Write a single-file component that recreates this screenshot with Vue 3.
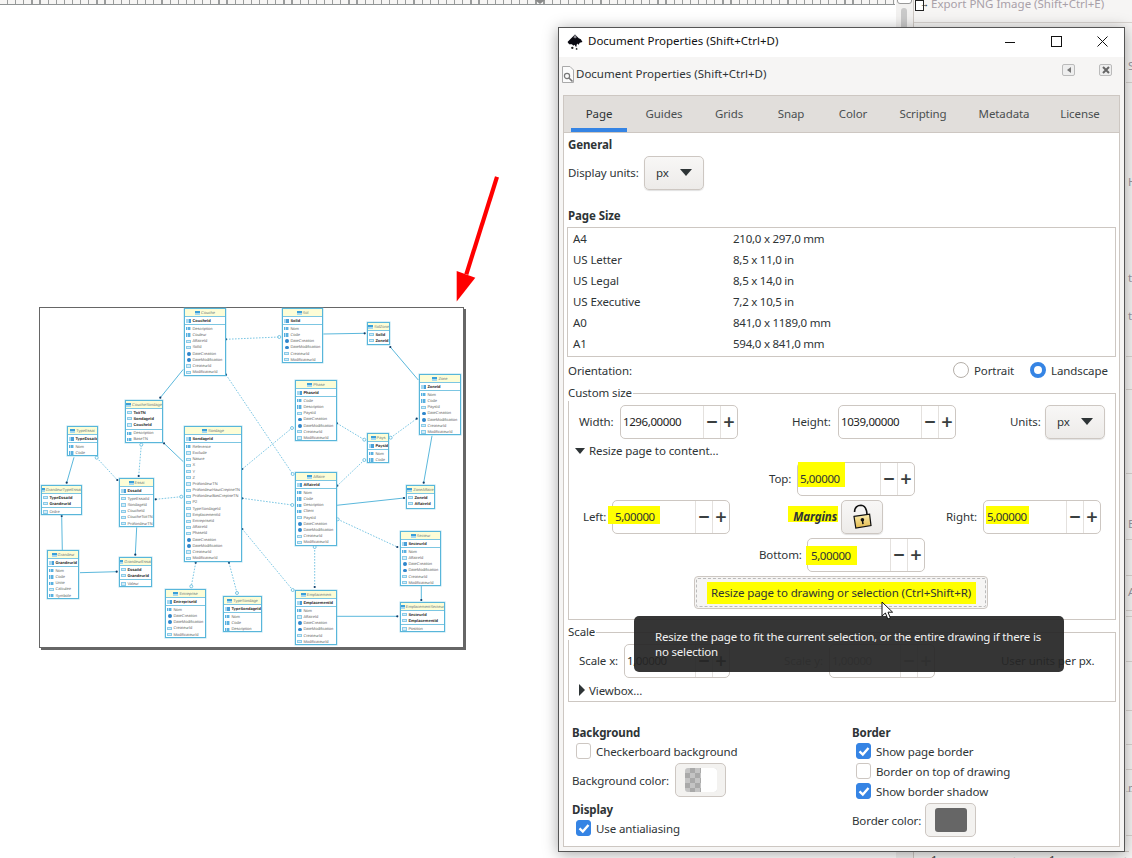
<script setup>
const t = (list, kind) => list.map((name) => ({ name, kind }));
const audit = [
  { name: 'DateCreation', kind: 'd' },
  { name: 'DateModification', kind: 'd' },
  { name: 'CreateurId', kind: 'n' },
  { name: 'ModificateurId', kind: 'n' },
];
const entities = [
  { name: 'Couche', x: 184, y: 308, w: 42, h: 68, pk: true, keys: ['CoucheId'], cols: [...t(['Description', 'Couleur'], 's'), ...t(['AffaireId', 'SolId'], 'n'), ...audit] },
  { name: 'CoucheSondage', x: 125, y: 400, w: 38, h: 43, keys: ['ToitTN', 'SondageId', 'CoucheId'], cols: t(['Description', 'BaseTN'], 's') },
  { name: 'TypeEssai', x: 67, y: 426, w: 31, h: 30, pk: true, keys: ['TypeEssaiId'], cols: t(['Nom', 'Code'], 's') },
  { name: 'Sondage', x: 184, y: 426, w: 58, h: 136, pk: true, keys: ['SondageId'], cols: [...t(['Reference'], 's'), ...t(['Exclude', 'Nature', 'X', 'Y', 'Z', 'ProfondeurTN', 'ProfondeurHautCrepineTN', 'ProfondeurBasCrepineTN', 'P2', 'TypeSondageId', 'EmplacementId', 'EntrepriseId', 'AffaireId', 'PhaseId'], 'n'), ...audit] },
  { name: 'GrandeurTypeEssai', x: 41, y: 485, w: 41, h: 30, keys: ['TypeEssaiId', 'GrandeurId'], cols: t(['Ordre'], 'n') },
  { name: 'Essai', x: 119, y: 478, w: 35, h: 49, pk: true, keys: ['EssaiId'], cols: t(['TypeEssaiId', 'SondageId', 'CoucheId', 'CoucheToitTN', 'ProfondeurTN'], 'n') },
  { name: 'Grandeur', x: 47, y: 550, w: 32, h: 49, pk: true, keys: ['GrandeurId'], cols: [...t(['Nom', 'Code', 'Unite'], 's'), ...t(['Calculee'], 'n'), ...t(['Symbole'], 's')] },
  { name: 'GrandeurEssai', x: 119, y: 557, w: 33, h: 30, keys: ['EssaiId', 'GrandeurId'], cols: t(['Valeur'], 'n') },
  { name: 'Entreprise', x: 165, y: 589, w: 41, h: 49, pk: true, keys: ['EntrepriseId'], cols: [...t(['Nom'], 's'), ...audit] },
  { name: 'TypeSondage', x: 223, y: 596, w: 39, h: 36, pk: true, keys: ['TypeSondageId'], cols: t(['Nom', 'Code', 'Description'], 's') },
  { name: 'Sol', x: 282, y: 308, w: 41, h: 55, pk: true, keys: ['SolId'], cols: [...t(['Nom', 'Code'], 's'), ...audit] },
  { name: 'SolZone', x: 367, y: 322, w: 23, h: 23, keys: ['SolId', 'ZoneId'], cols: [] },
  { name: 'Zone', x: 419, y: 374, w: 42, h: 61, pk: true, keys: ['ZoneId'], cols: [...t(['Nom', 'Code'], 's'), ...t(['PaysId'], 'n'), ...audit] },
  { name: 'Phase', x: 295, y: 380, w: 42, h: 61, pk: true, keys: ['PhaseId'], cols: [...t(['Code', 'Description'], 's'), ...t(['PaysId'], 'n'), ...audit] },
  { name: 'Pays', x: 367, y: 433, w: 22, h: 30, pk: true, keys: ['PaysId'], cols: t(['Nom', 'Code'], 's') },
  { name: 'Affaire', x: 295, y: 472, w: 42, h: 74, pk: true, keys: ['AffaireId'], cols: [...t(['Nom', 'Code', 'Description', 'Client'], 's'), ...t(['PaysId'], 'n'), ...audit] },
  { name: 'ZoneAffaire', x: 406, y: 485, w: 29, h: 24, keys: ['ZoneId', 'AffaireId'], cols: [] },
  { name: 'Secteur', x: 400, y: 531, w: 41, h: 55, pk: true, keys: ['SecteurId'], cols: [...t(['Nom'], 's'), ...t(['AffaireId'], 'n'), ...audit] },
  { name: 'EmplacementSecteur', x: 400, y: 602, w: 45, h: 30, keys: ['SecteurId', 'EmplacementId'], cols: t(['Position'], 'n') },
  { name: 'Emplacement', x: 295, y: 590, w: 42, h: 55, pk: true, keys: ['EmplacementId'], cols: [...t(['Nom'], 's'), ...t(['AffaireId'], 'n'), ...audit] },
];
// x1,y1,x2,y2,dashed, marker at start, marker at end ('d' = dot, 'c' = circle)
const links = [
  [183.3, 369.3, 160.3, 397.7, 0, '', 'd'],
  [164, 443.3, 183.3, 461.7, 0, 'd', ''],
  [226, 339.3, 279.3, 337, 1, 'd', 'c'],
  [226, 374.7, 292.7, 474, 1, 'd', 'c'],
  [74, 457.3, 66.7, 482.7, 0, '', 'd'],
  [96.7, 457.7, 117.3, 480, 1, 'c', 'd'],
  [141.3, 444.7, 138.7, 476, 1, 'c', 'd'],
  [61.7, 516, 62.3, 550, 0, 'd', ''],
  [80, 572.7, 116.7, 571.7, 0, '', 'd'],
  [136.7, 527.3, 135.3, 554.7, 0, '', 'd'],
  [155.7, 499.3, 181.3, 496.7, 1, 'd', 'c'],
  [195.7, 562.7, 191.3, 586.3, 1, 'd', 'c'],
  [229, 562.7, 237, 593, 1, 'd', 'c'],
  [242.3, 498.3, 292.3, 505, 1, 'd', 'c'],
  [242.3, 529, 292.7, 590, 1, 'd', 'c'],
  [242.3, 469, 292, 428, 1, 'd', 'c'],
  [323.3, 334, 364.7, 333.3, 0, '', 'd'],
  [390.3, 347, 418.3, 380, 0, 'd', ''],
  [337, 423.3, 364.3, 439.7, 1, 'd', 'c'],
  [390.7, 437.7, 416.7, 418.7, 1, 'c', 'd'],
  [364.3, 460, 337.3, 485.7, 1, 'c', 'd'],
  [432, 435.7, 423.7, 482.7, 0, '', 'd'],
  [336.7, 505.3, 404, 498, 0, '', 'd'],
  [337.7, 519.3, 397.3, 547, 1, 'c', 'd'],
  [314.7, 547, 314.7, 587, 1, 'c', 'd'],
  [421.3, 585.7, 421.3, 600, 0, '', 'd'],
  [336.7, 616.3, 397.3, 616.3, 0, '', 'd'],
].map(([x1, y1, x2, y2, dashed, a, b]) => ({ x1, y1, x2, y2, dashed, a, b }));
const markers = links.flatMap((l) => [
  ...(l.a ? [{ x: l.x1, y: l.y1, k: l.a }] : []),
  ...(l.b ? [{ x: l.x2, y: l.y2, k: l.b }] : []),
]);
const pageSizes = [
  ['A4', '210,0 x 297,0 mm'],
  ['US Letter', '8,5 x 11,0 in'],
  ['US Legal', '8,5 x 14,0 in'],
  ['US Executive', '7,2 x 10,5 in'],
  ['A0', '841,0 x 1189,0 mm'],
  ['A1', '594,0 x 841,0 mm'],
];
const tabs = [
  { label: 'Page', w: 56, gap: 9 },
  { label: 'Guides', w: 56, gap: 13 },
  { label: 'Grids', w: 48, gap: 16 },
  { label: 'Snap', w: 44, gap: 18 },
  { label: 'Color', w: 44, gap: 17 },
  { label: 'Scripting', w: 62, gap: 19 },
  { label: 'Metadata', w: 62, gap: 20 },
  { label: 'License', w: 50, gap: 0 },
];
const sideLines = [82, 356, 389, 473, 539, 575, 610, 616, 661, 710, 744, 769, 791, 835];
const sideText = [
  { s: 'S', y: 58 }, { s: 'H', y: 174 }, { s: 't', y: 270 }, { s: 't', y: 308 },
  { s: 'ES', y: 516 }, { s: 'AS', y: 584 }, { s: 'na', y: 780 },
];
</script>

<template>
  <div class="desktop">
    <div class="ruler"><span class="ruler-mark"></span></div>

    <div class="side">
      <div class="side-export"><span class="side-box"></span><span class="side-arrow">→</span>Export PNG Image (Shift+Ctrl+E)</div>
      <div class="side-rule"></div>
      <i v-for="y in sideLines" :key="y" class="side-line" :style="{ top: y + 'px' }"></i>
      <b v-for="x in sideText" :key="x.y" class="side-letter" :style="{ top: x.y + 'px' }">{{ x.s }}</b>
      <div class="side-foot"><span class="f1">1</span><span class="f2">+</span><span class="f3">1</span><span>+</span></div>
    </div>
    <div class="scroll"><span class="scroll-btn"></span><span class="scroll-thumb"></span></div>

    <div class="page"></div>
    <svg class="overlay" width="1132" height="858" viewBox="0 0 1132 858">
      <line v-for="(l, i) in links" :key="i" :x1="l.x1" :y1="l.y1" :x2="l.x2" :y2="l.y2"
        :class="l.dashed ? 'dash' : 'solid'" />
      <template v-for="(m, i) in markers" :key="'m' + i">
        <circle v-if="m.k === 'd'" :cx="m.x" :cy="m.y" r="1.1" fill="#0b3a66" />
        <circle v-else :cx="m.x" :cy="m.y" r="1.5" fill="#fff" stroke="#5bb8dc" stroke-width=".8" />
      </template>
      <path d="M495 176.2 L499 177.4 L468.3 275 L464.3 273.8 Z" fill="#ff0000" />
      <path d="M456.7 301.5 L456.7 271 L475.3 277.7 Z" fill="#ff0000" />
    </svg>

    <div v-for="e in entities" :key="e.name" class="entity"
      :style="{ left: e.x + 'px', top: e.y + 'px', width: e.w + 'px', height: e.h + 'px' }">
      <div class="e-head"><i class="e-tbl"></i>{{ e.name }}</div>
      <div class="e-keys">
        <div v-for="k in e.keys" :key="k" class="e-row e-key"><i :class="e.pk ? 'ic-pk' : 'ic-n'"></i>{{ k }}</div>
      </div>
      <div v-if="e.cols.length" class="e-cols">
        <div v-for="c in e.cols" :key="c.name" class="e-row"><i :class="'ic-' + c.kind"></i>{{ c.name }}</div>
      </div>
    </div>

    <section class="window">
      <header class="titlebar">
        <svg class="ink" width="16" height="16" viewBox="0 0 15 15">
          <path d="M7.5 .5 L11 4 L13 5 L14.5 7.5 L12 8.2 L10.8 10 L9.4 9 L8.6 12.5 L7 10 L6 11 L4.6 9.6 L2 9.5 L.5 7.5 L3 5 Z" fill="#0a0a12" />
          <path d="M7.5 .5 L9.2 3 L7.6 4.2 L6 3 Z" fill="#8a8a92" />
          <circle cx="5" cy="13" r="1.1" fill="#222" /><circle cx="9" cy="14" r=".8" fill="#222" />
        </svg>
        <span class="title">Document Properties (Shift+Ctrl+D)</span>
        <div class="wctl">
          <svg width="46" height="28" viewBox="0 0 46 28"><path d="M18 14.5 H28" stroke="#111" fill="none" /></svg>
          <svg width="46" height="28" viewBox="0 0 46 28"><rect x="18.5" y="8.5" width="10" height="10" stroke="#111" fill="none" /></svg>
          <svg width="46" height="28" viewBox="0 0 46 28"><path d="M18.5 8.5 L28.5 18.5 M28.5 8.5 L18.5 18.5" stroke="#111" fill="none" /></svg>
        </div>
      </header>

      <div class="dock">
        <svg width="14" height="17" viewBox="0 0 14 17">
          <path d="M1.5 .5 H9 L12.5 4 V16.5 H1.5 Z" fill="#fbfbfb" stroke="#aaa" />
          <circle cx="6" cy="10" r="2.6" fill="none" stroke="#777" stroke-width="1.2" />
          <path d="M8 12 L11.5 15.5" stroke="#777" stroke-width="1.6" />
        </svg>
        <span class="dock-title">Document Properties (Shift+Ctrl+D)</span>
        <div class="dock-btns">
          <span class="dock-btn"><svg width="10" height="10" viewBox="0 0 10 10"><path d="M7 2 V8 L3 5 Z" fill="#777" /></svg></span>
          <span class="dock-btn"><svg width="10" height="10" viewBox="0 0 10 10"><path d="M2 2 L8 8 M8 2 L2 8" stroke="#666" stroke-width="2" /></svg></span>
        </div>
      </div>

      <div class="notebook">
        <nav class="tabs">
          <span v-for="(tab, i) in tabs" :key="tab.label" class="tab" :class="{ active: i === 0 }"
            :style="{ width: tab.w + 'px', marginRight: tab.gap + 'px' }">{{ tab.label }}</span>
        </nav>

        <div class="content">
          <h4 class="head h-general">General</h4>
          <div class="display-row">
            <span class="l-display">Display units:</span>
            <span class="combo combo-display">px<i class="caret"></i></span>
          </div>

          <h4 class="head h-size">Page Size</h4>
          <div class="list">
            <div v-for="p in pageSizes" :key="p[0]" class="list-row"><span class="list-name">{{ p[0] }}</span><span class="list-dim">{{ p[1] }}</span></div>
          </div>

          <div class="orient">
            <span>Orientation:</span>
            <span class="radios">
              <i class="radio"></i><span class="r-label">Portrait</span>
              <i class="radio on"></i><span class="r-land">Landscape</span>
            </span>
          </div>

          <div class="frame frame-custom">
            <span class="legend">Custom size</span>
            <div class="row r-wh">
              <label class="l-w">Width:</label>
              <span class="spin"><span class="val plain">1296,00000</span><i>−</i><i>+</i></span>
              <label class="l-h">Height:</label>
              <span class="spin"><span class="val plain">1039,00000</span><i>−</i><i>+</i></span>
              <label class="l-u">Units:</label>
              <span class="combo combo-units">px<i class="caret"></i></span>
            </div>
            <div class="expander"><i class="tri-down"></i>Resize page to content...</div>
            <div class="row r-top m1">
              <label class="l-top">Top:</label>
              <span class="spin"><span class="val"><mark class="hl hl-top">5,00000</mark></span><i>−</i><i>+</i></span>
            </div>
            <div class="row r-mid m1">
              <label class="l-left">Left:</label>
              <span class="spin"><span class="val"><mark class="hl hl-left">5,00000</mark></span><i>−</i><i>+</i></span>
              <mark class="hl-margins">Margins</mark>
              <span class="lock">
                <svg width="22" height="26" viewBox="0 0 22 26">
                  <defs>
                    <linearGradient id="lockbody" x1="0" y1="0" x2="0" y2="1">
                      <stop offset="0" stop-color="#fbeeb0" />
                      <stop offset="1" stop-color="#e3b94c" />
                    </linearGradient>
                  </defs>
                  <path d="M3.6 8 C3.4 3.4 6.6 1.2 10 1.2 C13.6 1.4 15.6 4.2 16 10.4" fill="none" stroke="#111" stroke-width="1.6" />
                  <path d="M3 12.4 L18.6 10.2 L20 21.6 L4.8 24 Z" fill="url(#lockbody)" stroke="#111" stroke-width="1.2" />
                  <circle cx="11.4" cy="15.8" r="1.8" fill="#111" /><path d="M11.4 16.2 L12 20.2" stroke="#111" stroke-width="1.5" />
                </svg>
              </span>
              <label class="l-right">Right:</label>
              <span class="spin"><span class="val"><mark class="hl hl-right">5,00000</mark></span><i>−</i><i>+</i></span>
            </div>
            <div class="row r-bot m1">
              <label class="l-bot">Bottom:</label>
              <span class="spin"><span class="val"><mark class="hl hl-bot">5,00000</mark></span><i>−</i><i>+</i></span>
            </div>
            <div class="r-btn">
              <div class="resize-btn"><mark class="hl-btn">Resize page to drawing or selection (Ctrl+Shift+R)</mark></div>
            </div>
          </div>

          <div class="frame frame-scale">
            <span class="legend">Scale</span>
            <div class="row r-scale">
              <label class="l-sx">Scale x:</label>
              <span class="spin spin-s"><span class="val plain">1,00000</span><i>−</i><i>+</i></span>
              <label class="l-sy">Scale y:</label>
              <span class="spin spin-s dis"><span class="val plain">1,00000</span><i>−</i><i>+</i></span>
              <label class="l-uu">User units per px.</label>
            </div>
            <div class="expander vb"><i class="tri-right"></i>Viewbox...</div>
          </div>

          <div class="bottom">
            <div class="col-l">
              <h4 class="head b-head">Background</h4>
              <div class="chk c1"><i class="box"></i>Checkerboard background</div>
              <div class="color-row"><span class="l-bg">Background color:</span>
                <span class="swatch-btn"><i class="swatch checker"></i></span>
              </div>
              <h4 class="head b-head">Display</h4>
              <div class="chk c1"><i class="box on"><svg width="16" height="16" viewBox="0 0 16 16"><path d="M3.5 8.4 L6.8 11.5 L12.5 5" fill="none" stroke="#fff" stroke-width="2.4" /></svg></i>Use antialiasing</div>
            </div>
            <div class="col-r">
              <h4 class="head b-head">Border</h4>
              <div class="chk c1"><i class="box on"><svg width="16" height="16" viewBox="0 0 16 16"><path d="M3.5 8.4 L6.8 11.5 L12.5 5" fill="none" stroke="#fff" stroke-width="2.4" /></svg></i>Show page border</div>
              <div class="chk c2"><i class="box"></i>Border on top of drawing</div>
              <div class="chk c2"><i class="box on"><svg width="16" height="16" viewBox="0 0 16 16"><path d="M3.5 8.4 L6.8 11.5 L12.5 5" fill="none" stroke="#fff" stroke-width="2.4" /></svg></i>Show border shadow</div>
              <div class="color-row cr2"><span class="l-bc">Border color:</span>
                <span class="swatch-btn"><i class="swatch grey"></i></span>
              </div>
            </div>
          </div>
        </div>
      </div>
    </section>

    <div class="tooltip">Resize the page to fit the current selection, or the entire drawing if there is no selection</div>
    <svg class="cursor" width="14" height="20" viewBox="0 0 14 20">
      <path d="M1 1 V15 L4.4 12 L6.8 18 L9.4 17 L7 11.2 H11.6 Z" fill="#fff" stroke="#111" stroke-width="1" />
    </svg>
  </div>
</template>

<style>
html, body { margin: 0; background: #fff; }
</style>

<style scoped>
.desktop {
  position: relative; width: 1132px; height: 858px; overflow: hidden; background: #fff;
  font-family: "Noto Sans", "Open Sans", sans-serif; font-size: 11.5px; letter-spacing: -.1px; color: #2e3436;
}
i { font-style: normal; display: block; }

/* canvas chrome */
.ruler {
  position: absolute; left: 0; top: 0; width: 895px; height: 4px; border-bottom: 1px solid #8f9394;
  background: repeating-linear-gradient(90deg, #f6f5f4 0 6.9px, #9a9c9c 6.9px 8.13px);
}
.ruler-mark {
  position: absolute; left: 535px; top: 0; border: 5px solid transparent; border-top: 4px solid #8a8a8a; border-bottom: 0;
}
.scroll { position: absolute; left: 896px; top: 0; width: 17px; height: 858px; background: #f2f1f0; }
.scroll-btn { position: absolute; left: 1px; top: -6px; width: 15px; height: 10px; background: #fff; border: 1px solid #999; border-radius: 3px; box-sizing: border-box; }
.scroll-thumb { position: absolute; left: 5px; top: 8px; width: 6px; height: 40px; background: #c9c9c9; border-radius: 3px; }
.side { position: absolute; left: 913px; top: 0; width: 219px; height: 858px; background: #f6f5f4; border-left: 1px solid #cdc7c2; box-sizing: border-box; }
.side-export { display: flex; align-items: center; height: 7px; color: #a8a0a8; padding-left: 1px; white-space: nowrap; font-size: 11.5px; letter-spacing: 0; }
.side-box { width: 9px; height: 11px; border: 1px solid #222; background: #fff; margin-top: 3px; box-sizing: border-box; flex: none; }
.side-arrow { color: #222; font-size: 9px; width: 11px; margin-left: -4px; flex: none; }
.side-rule { margin-top: 15px; height: 1px; background: #d8d4d0; }
.side-line { position: absolute; left: 212px; width: 8px; height: 1px; background: #d8d4d0; }
.side-letter { position: absolute; left: 214px; font-weight: 400; color: #9a95a0; }
.side-foot { position: absolute; left: 15px; bottom: -7px; width: 200px; display: flex; color: #444; height: 14px; border-top: 1px solid #cdc7c2; padding-left: 2px; box-sizing: border-box; }
.f1 { width: 80px; }
.f2 { width: 38px; }
.f3 { width: 73px; }

/* diagram */
.page { position: absolute; left: 39px; top: 307px; width: 423px; height: 339px; border: 1px solid #666; box-shadow: 2px 2px 0 #666; background: #fff; }
.overlay { position: absolute; left: 0; top: 0; pointer-events: none; }
.solid { stroke: #5bb8dc; stroke-width: 1; }
.dash { stroke: #6cc0e0; stroke-width: .9; stroke-dasharray: 1.6 1.4; }
.entity {
  position: absolute; box-sizing: border-box; border: 1px solid #58b6da; background: #fff; overflow: hidden;
  box-shadow: 0 0 0 .5px rgba(120, 200, 230, .55);
  display: flex; flex-direction: column; font-size: 4px; letter-spacing: 0; color: #666; white-space: nowrap; line-height: 6.2px;
  font-family: "Liberation Sans", sans-serif; text-rendering: geometricPrecision;
}
.e-head { height: 7px; line-height: 7px; background: #fdfdd6; display: flex; justify-content: center; align-items: center; gap: 1px; color: #6b7b80; flex: none; }
.e-tbl { width: 5px; height: 4px; background: linear-gradient(#3b9fd8 45%, #a7d8ef 45%); }
.e-keys { border-top: 1px solid #7cc6e2; padding: .5px 0; flex: none; }
.e-cols { border-top: 1px solid #7cc6e2; padding-top: .6px; }
.e-row { height: 6.2px; display: flex; align-items: center; gap: 1px; padding-left: 1.4px; }
.e-key { color: #222; font-weight: 700; }
.e-row i { width: 5px; height: 3.2px; flex: none; }
.ic-s { background: repeating-linear-gradient(90deg, #5ab0e0 0 1px, #b5def2 1px 1.7px); }
.ic-n { background: #d5ecf7; border: .5px solid #8ccbe8; box-sizing: border-box; }
.ic-d { background: #2f86cc; border-radius: 50%; width: 3.8px !important; height: 3.8px !important; margin: 0 .6px; }
.ic-pk { background: linear-gradient(90deg, #a7d8ef 50%, #4a9fd8 50%); height: 4px !important; }

/* window */
.window {
  position: absolute; left: 558px; top: 27px; width: 567px; height: 825px; box-sizing: border-box;
  border: 1px solid #555; background: #f6f5f4; box-shadow: 0 2px 14px rgba(0, 0, 0, .35);
  display: flex; flex-direction: column;
}
.titlebar { height: 29px; background: #fff; display: flex; align-items: center; padding: 0 0 2px 8px; box-sizing: border-box; flex: none; color: #111; }
.title { margin: -2px 0 0 5px; font-size: 11.5px; letter-spacing: 0; }
.wctl { margin-left: auto; margin-right: -1px; display: flex; }
.wctl svg { display: block; }
.dock { height: 38px; flex: none; display: flex; align-items: center; padding: 0 0 4px 2px; box-sizing: border-box; gap: 1px; }
.dock-title { color: #2e3436; font-size: 11.5px; letter-spacing: 0; margin-top: -2px; }
.dock-btns { margin-left: auto; display: flex; gap: 24px; margin-right: 12px; margin-top: -8px; }
.dock-btn { width: 11px; height: 10px; border: 1px solid #bbb; border-radius: 2px; background: #eee; display: flex; align-items: center; justify-content: center; }
.dock-btn svg { display: block; }
.notebook { flex: 1; margin: 0 4px 4px; border: 1px solid #cdc7c2; background: #fff; display: flex; flex-direction: column; min-height: 0; }
.tabs { height: 37px; flex: none; display: flex; background: #e1dedb; border-bottom: 1px solid #cdc7c2; padding-left: 7px; box-sizing: border-box; }
.tab { height: 36px; box-sizing: border-box; display: flex; align-items: center; justify-content: center; flex: none; color: #4a4f50; padding-bottom: 1px; }
.tab.active { border-bottom: 4px solid #3584e4; color: #2e3436; padding: 2px 0 0; }
.content { flex: 1; padding: 0 3px; position: relative; }
.head { margin: 0; padding-left: 1px; font-size: 11.5px; font-weight: 700; height: 18px; line-height: 18px; color: #2e3436; }
.h-general { margin-top: 3px; }
.h-size { margin-top: 17px; }
.display-row { display: flex; align-items: center; height: 34px; margin-top: 2px; padding-left: 1px; }
.l-display { width: 76px; margin-top: -2px; }
.combo {
  box-sizing: border-box; display: flex; align-items: center; border: 1px solid #cdc7c2; border-radius: 5px;
  background: linear-gradient(#f8f7f6, #edebe9); box-shadow: 0 1px 1px rgba(0, 0, 0, .12); height: 34px; padding: 0 0 2px 11px; color: #2e3436;
}
.combo-display { width: 60px; }
.combo-units { width: 60px; }
.caret { width: 0; height: 0; border: 6px solid transparent; border-top: 7px solid #2e3436; border-bottom: 0; margin-left: 11px; }
.list { border: 1px solid #cdc7c2; height: 130px; margin-top: 2px; box-sizing: border-box; }
.list-row { display: flex; height: 21px; line-height: 21px; padding-left: 5px; color: #2e3436; }
.list-name { width: 160px; }
.list-dim { letter-spacing: -.25px; }
.orient { display: flex; height: 20px; align-items: center; margin-top: 4px; padding: 0 0 2px 1px; box-sizing: border-box; }
.radios { margin-left: auto; display: flex; align-items: center; margin-right: 9px; }
.radio { width: 14px; height: 14px; border: 1px solid #b5afa9; border-radius: 50%; background: #fff; flex: none; }
.radio.on { border: 4px solid #3584e4; width: 8px; height: 8px; }
.r-label { margin-left: 5px; width: 56px; }
.r-land { margin-left: 5px; width: 56px; white-space: nowrap; }
.frame { border: 1px solid #cdc7c2; position: relative; box-sizing: border-box; margin-left: 1px; }
.frame-custom { margin-top: 12px; height: 227px; padding-top: 11px; }
.frame-scale { margin-top: 12px; height: 70px; padding-top: 11px; }
.legend { position: absolute; left: -1px; top: -9px; background: #fff; line-height: 16px; padding-right: 1px; }
.row { display: flex; align-items: center; height: 34px; }
.row label { flex: none; margin-top: -2px; }
.row.m1 label { margin-top: 0; padding-bottom: 1px; }
.spin {
  box-sizing: border-box; width: 118px; height: 34px; border: 1px solid #cdc7c2; border-radius: 5px; display: flex; align-items: stretch; background: #fff; flex: none; color: #222;
}
.spin .val { flex: 1; display: flex; align-items: center; padding-left: 2px; min-width: 0; letter-spacing: -.4px; }
.spin .val.plain { padding-bottom: 2px; }
.spin i { width: 17px; display: flex; align-items: center; justify-content: center; border-left: 1px solid #e4e1de; font-size: 20px; font-weight: 600; color: #3a3f40; letter-spacing: 0; padding-bottom: 2px; box-sizing: border-box; }
.l-w { margin-left: 10px; width: 41px; }
.l-h { margin-left: 54px; width: 46px; }
.l-u { margin-left: 54px; width: 35px; }
.expander { height: 20px; margin: 1px 0 1px 6px; display: flex; align-items: center; gap: 4px; }
.tri-down { width: 0; height: 0; border: 5.5px solid transparent; border-top: 6px solid #2e3436; border-bottom: 0; margin-top: 2px; }
.tri-right { width: 0; height: 0; border: 6px solid transparent; border-left: 6px solid #2e3436; border-right: 0; margin-left: 4px; }
.r-top { margin-top: 2px; }
.l-top { margin-left: 200px; width: 28px; }
.r-mid { margin-top: 4px; }
.l-left { margin-left: 14px; width: 29px; }
.hl, .hl-margins, .hl-btn { background: #ffff00; color: #2e3436; }
.hl { display: block; box-sizing: border-box; flex: none; white-space: nowrap; }
.hl-top { width: 47px; margin: -9px 0 0 -2px; padding: 8px 0 0 2px; height: 25px; line-height: 17px; }
.hl-left { width: 52px; margin: -4px 0 0 -7px; padding: 3px 0 0 7px; height: 18px; line-height: 15px; }
.hl-right { width: 43px; margin: -4px 0 0 0; padding: 3px 0 0 1px; height: 18px; line-height: 15px; }
.hl-bot { width: 51px; margin-left: -4px; padding-left: 5px; height: 19px; line-height: 19px; }
.hl-margins { font-weight: 700; font-style: italic; margin: -6px 0 0 58px; padding: 4px 1px 0 0; box-sizing: border-box; width: 50px; height: 16px; line-height: 13px; text-align: right; flex: none; }
.lock { box-sizing: border-box; width: 42px; height: 34px; margin-left: 3px; border: 1px solid #cdc7c2; border-radius: 5px; background: linear-gradient(#f8f7f6, #edebe9); display: flex; align-items: center; justify-content: center; flex: none; box-shadow: 0 1px 1px rgba(0, 0, 0, .12); }
.l-right { margin-left: 63px; width: 37px; }
.r-bot { margin-top: 4px; }
.l-bot { margin-left: 190px; width: 48px; }
.r-btn { margin-top: 4px; margin-left: 125px; }
.resize-btn {
  box-sizing: border-box; width: 294px; height: 33px; border: 1px solid #cdc7c2; border-radius: 4px; background: #f6f5f4; outline: 1px dashed #bbb; outline-offset: -3px; display: flex; align-items: center; justify-content: center;
}
.hl-btn { box-sizing: border-box; width: 269px; text-align: center; line-height: 22px; white-space: nowrap; }
.l-sx { margin-left: 10px; width: 45px; }
.spin-s { width: 106px; }
.l-sy { margin-left: 54px; width: 45px; color: #a5a5a5; }
.dis { color: #aaa; }
.dis i { color: #bbb; }
.l-uu { margin-left: 66px; }
.vb { margin-top: 2px; }
.bottom { display: flex; margin: 22px 0 0 4px; }
.col-l { width: 280px; }
.b-head { margin: 0; }
.chk { display: flex; align-items: center; height: 16px; gap: 5px; }
.c1 { margin: 1px 0 0 5px; }
.c2 { margin: 4px 0 0 5px; }
.box { box-sizing: border-box; width: 15px; height: 16px; border: 1px solid #cdc7c2; border-radius: 3px; background: #fff; flex: none; }
.box.on { background: #3584e4; border-color: #3584e4; }
.box svg { display: block; margin: -1px; }
.color-row { display: flex; align-items: center; height: 34px; margin-top: 4px; margin-bottom: 4px; padding-left: 1px; }
.l-bg { width: 103px; }
.l-bc { width: 73px; }
.swatch-btn { box-sizing: border-box; width: 51px; height: 34px; border: 1px solid #cdc7c2; border-radius: 5px; background: #f3f2f0; display: flex; align-items: center; justify-content: center; }
.swatch { width: 32px; height: 24px; border-radius: 3px; }
.checker { background: repeating-conic-gradient(#a9a9a9 0 25%, #c4c4c4 0 50%) 0 0 / 10px 10px; position: relative; overflow: hidden; }
.checker::after { content: ""; position: absolute; left: 16px; top: 0; right: 0; bottom: 0; background: #fff; }
.grey { background: #666; }
.cr2 { margin-top: 4px; }

.tooltip {
  position: absolute; left: 634px; top: 616px; width: 430px; height: 56px; box-sizing: border-box; padding: 13px 12px 0 21px;
  background: rgba(38, 38, 38, .93); border-radius: 5px; color: #f2f2f2; line-height: 15px; font-size: 11.5px; letter-spacing: -.19px;
}
.cursor { position: absolute; left: 881px; top: 601px; }
</style>
